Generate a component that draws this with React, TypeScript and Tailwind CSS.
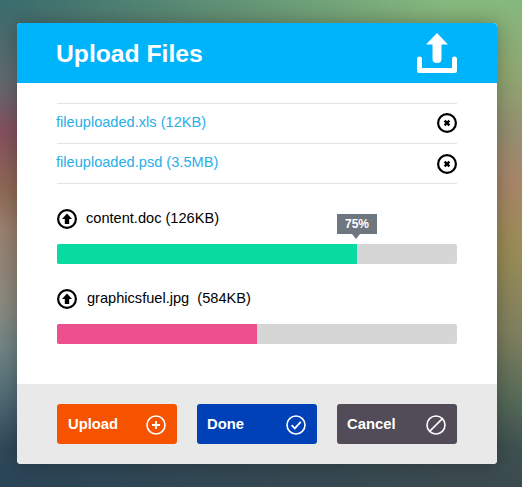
const font = "font-['Liberation_Sans',Arial,sans-serif]";

function RemoveIcon({ offset }: { offset: string }) {
  return (
    <svg width="20" height="20" viewBox="0 0 20 20" fill="none" stroke="#000" className={`shrink-0 ${offset}`}>
      <circle cx="10" cy="10" r="8.9" strokeWidth="2.2" />
      <path d="M7.6 7.6 12.4 12.4M12.4 7.6 7.6 12.4" strokeWidth="2.4" />
    </svg>
  );
}

function UpIcon() {
  return (
    <svg width="20" height="20" viewBox="0 0 20 20" fill="none" className="shrink-0">
      <circle cx="10" cy="10" r="8.9" stroke="#000" strokeWidth="2.2" />
      <path d="M10 4.6 15 10H12.2V15H7.8V10H5Z" fill="#000" />
    </svg>
  );
}

function PlusIcon() {
  return (
    <svg width="20" height="20" viewBox="0 0 20 20" fill="none" stroke="#fff" strokeWidth="1.6">
      <circle cx="10" cy="10" r="9" />
      <path d="M10 6V14M6 10H14" strokeWidth="1.8" />
    </svg>
  );
}

function CheckIcon() {
  return (
    <svg width="20" height="20" viewBox="0 0 20 20" fill="none" stroke="#fff" strokeWidth="1.6">
      <circle cx="10" cy="10" r="9" />
      <path d="M5.6 10.2 8.8 13.4 14.8 6.8" strokeWidth="1.8" />
    </svg>
  );
}

function BanIcon() {
  return (
    <svg width="20" height="20" viewBox="0 0 20 20" fill="none" stroke="#fff" strokeWidth="1.6">
      <circle cx="10" cy="10" r="9" />
      <path d="M3.6 16.4 16.4 3.6" />
    </svg>
  );
}

function FileRow({ label, offset }: { label: string; offset: string }) {
  return (
    <div className="flex h-10 items-center justify-between border-b border-[#e2e2e2]">
      <span className="ml-[-1px] mt-[-1px] text-[14.6px] text-[#29aee8]">{label}</span>
      <RemoveIcon offset={offset} />
    </div>
  );
}

function Button({ label, color, pad, icon }: { label: string; color: string; pad: string; icon: React.ReactNode }) {
  return (
    <div className={`flex h-10 w-[120px] items-center justify-between rounded-[3px] pr-[11px] text-[14.8px] font-bold text-white ${pad} ${color}`}>
      <span>{label}</span>
      <span className="mt-[1px]">{icon}</span>
    </div>
  );
}

export default function App() {
  return (
    <div className={`relative h-[487px] w-[522px] overflow-hidden pl-[17px] pt-[23px] ${font} bg-[linear-gradient(180deg,#386c6e_0%,#5f6a70_16%,#85505f_27%,#8f6a55_39%,#9a8070_47%,#8a8a80_62%,#6f8585_72%,#4f6a75_82%,#2f4a5a_92%,#2a4558_100%)]`}>
      <div className="pointer-events-none absolute inset-0 bg-[linear-gradient(180deg,#85b97e_0%,#90a570_16%,#958f70_27%,#a8856a_37%,#9a8c55_51%,#80805f_68%,#566a58_82%,#3f5050_92%,#3a4a50_100%)] [mask-image:linear-gradient(90deg,transparent_0%,black_85%)]" />
      <div className="relative w-[480px] overflow-hidden rounded-[4px] bg-white shadow-[0_0_20px_rgba(0,0,0,0.3)]">
        <div className="flex h-[60px] items-center justify-between bg-[#00b4fc] pl-[39px] pr-10">
          <h1 className="mt-[2px] text-[24.7px] font-bold text-white">Upload Files</h1>
          <svg width="40" height="40" viewBox="0 0 40 40" fill="none">
            <path d="M20 0 31 11.5H24.5V26C24.5 28.5 23 30 20 30C17 30 15.5 28.5 15.5 26V11.5H9Z" fill="#fff" />
            <path d="M2.5 26V37.5H37.5V26" stroke="#fff" strokeWidth="5" strokeLinejoin="round" strokeLinecap="round" />
          </svg>
        </div>
        <div className="h-[301px] px-10 pt-5">
          <div className="border-t border-[#e2e2e2]">
            <FileRow label="fileuploaded.xls (12KB)" offset="mt-[-1px]" />
            <FileRow label="fileuploaded.psd (3.5MB)" offset="mt-[1px]" />
          </div>
          <div className="mt-[25px] flex h-5 items-center gap-[9px] text-[14.6px] text-black">
            <UpIcon />
            <span className="mt-[-1px]">content.doc (126KB)</span>
          </div>
          <div className="relative mt-[15px] h-5 rounded-[2px] bg-[#d6d6d6]">
            <div className="h-full w-[300px] rounded-l-[2px] bg-[#08dba0]" />
            <div className="absolute left-[280px] top-[-30px] flex h-5 w-10 items-center justify-center bg-[#6e7680] text-[12px] font-bold text-white">
              75%
              <span className="absolute left-[15px] top-5 h-0 w-0 border-x-[4px] border-t-[5px] border-x-transparent border-t-[#6e7680]" />
            </div>
          </div>
          <div className="mt-[25px] flex h-5 items-center gap-[10px] text-[14.6px] text-black">
            <UpIcon />
            <span className="mt-[-1px] whitespace-pre">graphicsfuel.jpg  (584KB)</span>
          </div>
          <div className="mt-[15px] h-5 rounded-[2px] bg-[#d6d6d6]">
            <div className="h-full w-[200px] rounded-l-[2px] bg-[#ec4f8d]" />
          </div>
        </div>
        <div className="flex h-20 items-center gap-5 bg-[#e9e9e9] px-10">
          <Button label="Upload" color="bg-[#f55300]" pad="pl-[11px]" icon={<PlusIcon />} />
          <Button label="Done" color="bg-[#0041b8]" pad="pl-[10px]" icon={<CheckIcon />} />
          <Button label="Cancel" color="bg-[#524c58]" pad="pl-[10px]" icon={<BanIcon />} />
        </div>
      </div>
    </div>
  );
}
